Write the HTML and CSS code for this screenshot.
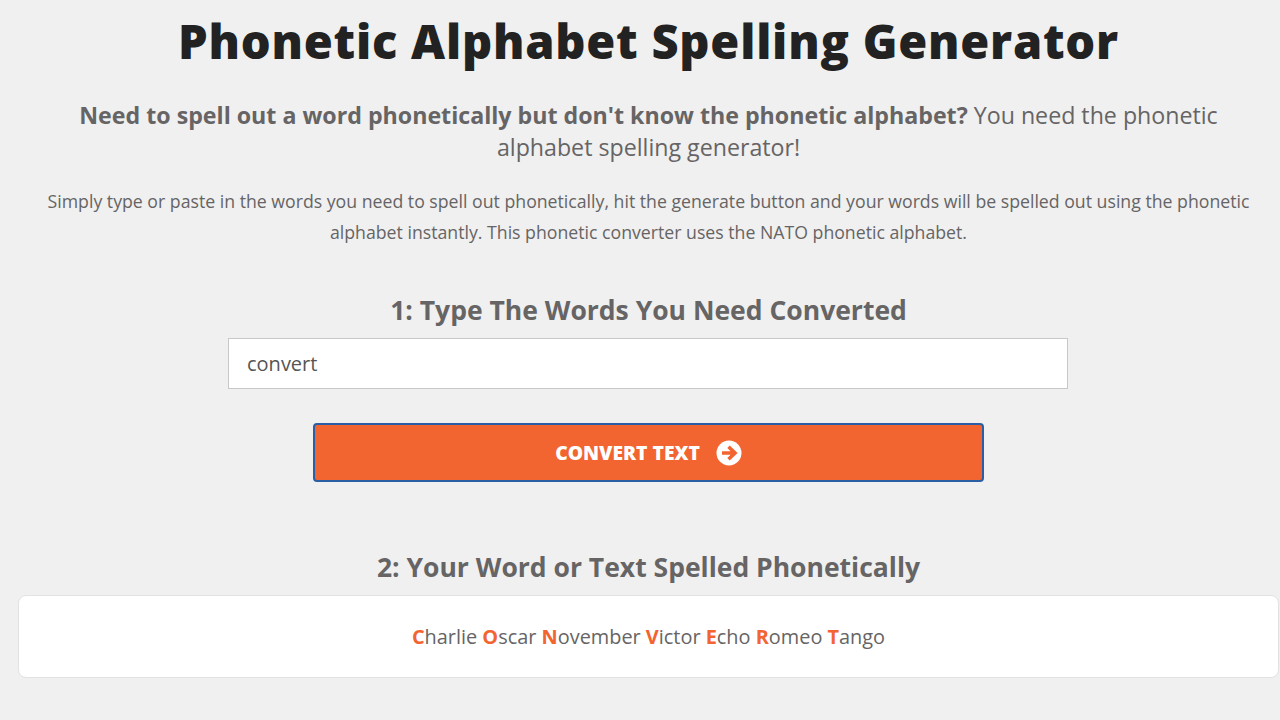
FILE: index.html
```html
<!DOCTYPE html>
<html lang="en">
<head>
<meta charset="utf-8">
<title>Phonetic Alphabet Spelling Generator</title>
<link rel="stylesheet" href="styles.css">
</head>
<body>
<main class="page">
  <h1 class="title">Phonetic Alphabet Spelling Generator</h1>
  <p class="lead"><strong>Need to spell out a word phonetically but don't know the phonetic alphabet?</strong> You need the phonetic alphabet spelling generator!</p>
  <p class="intro">Simply type or paste in the words you need to spell out phonetically, hit the generate button and your words will be spelled out using the phonetic alphabet instantly. This phonetic converter uses the NATO phonetic alphabet.</p>
  <h2 class="step step-one">1: Type The Words You Need Converted</h2>
  <input class="field" type="text" value="convert" aria-label="Words to convert">
  <button class="convert" type="button">
    <span>CONVERT TEXT</span>
    <svg class="arrow" viewBox="0 0 26 26" aria-hidden="true">
      <circle cx="13" cy="13" r="12.5" fill="#fff"/>
      <path d="M6 13H18M12.5 6.8L19 13L12.5 19.2" fill="none" stroke="#f26430" stroke-width="3.6"/>
    </svg>
  </button>
  <h2 class="step step-two">2: Your Word or Text Spelled Phonetically</h2>
  <div class="result">
    <span><b>C</b>harlie <b>O</b>scar <b>N</b>ovember <b>V</b>ictor <b>E</b>cho <b>R</b>omeo <b>T</b>ango</span>
  </div>
</main>
</body>
</html>
```
FILE: styles.css
```css
* { box-sizing: border-box; }
html, body { margin: 0; padding: 0; }
body {
  background: #f0f0f0;
  color: #666464;
  font-family: "Open Sans", "Noto Sans", sans-serif;
  height: 720px;
  overflow: hidden;
}
.page {
  width: 1261px;
  margin-left: 18px;
  display: flex;
  flex-direction: column;
  align-items: center;
}
.title {
  margin: 8px 0 0;
  font-size: 47px;
  line-height: 66px;
  font-weight: 800;
  color: #222;
  letter-spacing: 0.77px;
  white-space: nowrap;
}
.lead {
  width: 1180px;
  margin: 25px 0 0;
  font-size: 23.2px;
  line-height: 32px;
  text-align: center;
}
.lead strong { font-weight: 700; }
.intro {
  width: 1230px;
  margin: 23px 0 0;
  font-size: 17.7px;
  line-height: 31px;
  text-align: center;
}
.step {
  margin: 0;
  font-size: 26.5px;
  line-height: 36px;
  font-weight: 700;
  white-space: nowrap;
}
.step-one { margin-top: 44px; }
.field {
  display: block;
  width: 840px;
  height: 51px;
  margin: 10px 1px 0 0;
  padding: 0 18px;
  background: #fff;
  border: 1px solid #c8c8c8;
  border-radius: 0;
  color: #555;
  font: 20px "Open Sans", sans-serif;
}
.convert {
  display: flex;
  align-items: center;
  justify-content: center;
  gap: 16px;
  width: 671px;
  height: 59px;
  margin-top: 34px;
  background: #f26430;
  border: 2px solid #2a5fa5;
  border-radius: 4px;
  color: #fff;
  font: 800 19.3px "Open Sans", sans-serif;
}
.arrow { width: 26px; height: 26px; }
.step-two { margin-top: 67px; }
.result {
  display: flex;
  align-items: center;
  justify-content: center;
  width: 100%;
  height: 83px;
  margin-top: 10px;
  background: #fff;
  border: 1px solid #e2e2e2;
  border-radius: 8px;
  font-size: 19.9px;
}
.result b { color: #f26430; font-weight: 700; }
```
